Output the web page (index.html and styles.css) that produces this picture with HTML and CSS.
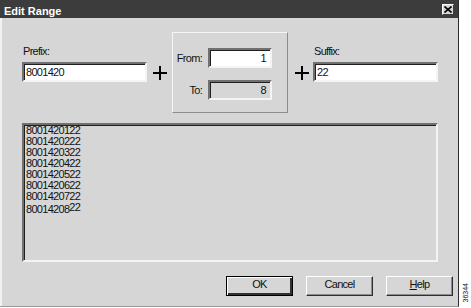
FILE: index.html
```html
<!DOCTYPE html>
<html>
<head>
<meta charset="utf-8">
<title>Edit Range</title>
<link rel="stylesheet" href="styles.css">
</head>
<body>
<div class="page">
  <div class="dialog">
    <div class="titlebar">
      <span class="title">Edit Range</span>
      <span class="close">
        <svg width="8" height="7" viewBox="0 0 8 7"><path d="M0.5 0.5 L7.5 6.5 M7.5 0.5 L0.5 6.5" stroke="#000" stroke-width="1.6" fill="none"/></svg>
      </span>
    </div>
    <div class="content">
      <div class="top-row">
        <div class="field-col">
          <span class="lbl">Prefix:</span>
          <div class="input">8001420</div>
        </div>
        <div class="plus">
          <svg width="14" height="14" viewBox="0 0 14 14"><rect x="0" y="6" width="14" height="2" fill="#000"/><rect x="6" y="0" width="2" height="14" fill="#000"/></svg>
        </div>
        <div class="group">
          <div class="grow">
            <span class="glbl">From:</span>
            <div class="input num">1</div>
          </div>
          <div class="grow">
            <span class="glbl">To:</span>
            <div class="input num disabled">8</div>
          </div>
        </div>
        <div class="plus plus2">
          <svg width="14" height="14" viewBox="0 0 14 14"><rect x="0" y="6" width="14" height="2" fill="#000"/><rect x="6" y="0" width="2" height="14" fill="#000"/></svg>
        </div>
        <div class="field-col">
          <span class="lbl">Suffix:</span>
          <div class="input">22</div>
        </div>
      </div>
      <div class="list">
        <div class="item">8001420122</div>
        <div class="item">8001420222</div>
        <div class="item">8001420322</div>
        <div class="item">8001420422</div>
        <div class="item">8001420522</div>
        <div class="item">8001420622</div>
        <div class="item">8001420722</div>
        <div class="item">80014208<span class="raised">22</span></div>
      </div>
      <div class="buttons">
        <div class="btn default">OK</div>
        <div class="btn">Cancel</div>
        <div class="btn"><u>H</u>elp</div>
      </div>
    </div>
  </div>
  <div class="side"><span class="figid">36344</span></div>
</div>
</body>
</html>
```

FILE: styles.css
```css
* { box-sizing: border-box; }
html, body { margin: 0; padding: 0; background: #fff; }
body {
  font-family: "Liberation Sans", Arial, sans-serif;
  font-size: 11px;
  letter-spacing: -0.7px;
  color: #111;
}
.page {
  display: flex;
  width: 471px;
  height: 308px;
}
.dialog {
  width: 459px;
  height: 307px;
  background: #d6d6d6;
  border-right: 1px solid #2c2c2c;
  border-bottom: 1px solid #9a9a9a;
  box-shadow: inset 3px 0 0 -1px #f2f2f2;
  display: flex;
  flex-direction: column;
}
.titlebar {
  height: 18px;
  background: #3c3c3c;
  display: flex;
  justify-content: space-between;
  align-items: flex-start;
  padding: 0 4px 0 4px;
}
.title {
  font-weight: bold;
  font-size: 11px;
  letter-spacing: 0;
  line-height: 14px;
  padding-top: 4px;
  color: #fff;
}
.close {
  margin-top: 4px;
  width: 12px;
  height: 11px;
  background: #d6d6d6;
  border: 1px solid;
  border-color: #fff #404040 #404040 #fff;
  display: flex;
  align-items: center;
  justify-content: center;
}
.close svg { display: block; }
.content {
  padding: 14px 20px 0 22px;
  display: flex;
  flex-direction: column;
}
.top-row {
  display: flex;
  align-items: flex-start;
  height: 81px;
}
.field-col {
  width: 125px;
  padding-top: 13px;
  display: flex;
  flex-direction: column;
}
.lbl {
  display: block;
  height: 13px;
  line-height: 13px;
  margin-bottom: 4px;
  padding-left: 1px;
}
.input {
  height: 20px;
  background: #fff;
  border: 2px solid;
  border-color: #707070 #f4f4f4 #f4f4f4 #707070;
  box-shadow: inset 1px 1px 0 #202020;
  line-height: 16px;
  padding: 0 2px 0 2px;
  white-space: nowrap;
}
.plus {
  width: 25px;
  padding: 34px 0 0 6px;
}
.plus2 { padding-left: 7px; }
.plus svg { display: block; }
.group {
  width: 116px;
  height: 81px;
  border: 1px solid;
  border-color: #f6f6f6 #8c8c8c #8c8c8c #f6f6f6;
  padding-top: 15px;
  display: flex;
  flex-direction: column;
  gap: 12px;
}
.grow {
  display: flex;
  align-items: center;
  gap: 6px;
}
.glbl {
  width: 29px;
  text-align: right;
}
.input.num {
  width: 64px;
  text-align: right;
  padding-right: 4px;
}
.input.disabled {
  background: #d6d6d6;
}
.list {
  margin-top: 10px;
  height: 139px;
  border: 2px solid;
  border-color: #707070 #f4f4f4 #f4f4f4 #707070;
  box-shadow: inset 1px 1px 0 #202020;
  padding: 0 2px;
}
.item {
  line-height: 11px;
  height: 11px;
  white-space: nowrap;
}
.raised {
  vertical-align: 2px;
}
.buttons {
  margin-top: 14px;
  margin-right: -15px;
  display: flex;
  justify-content: flex-end;
  gap: 13px;
}
.btn {
  width: 67px;
  height: 20px;
  border: 1px solid;
  border-color: #fff #303030 #303030 #fff;
  box-shadow: inset -1px -1px 0 #8c8c8c;
  display: flex;
  align-items: center;
  justify-content: center;
  padding-bottom: 3px;
  line-height: 13px;
}
.btn.default {
  border: 1px solid #000;
  box-shadow: inset 1px 1px 0 #fff, inset -2px -2px 0 #303030;
}
.side {
  width: 12px;
  display: flex;
  flex-direction: column;
  justify-content: flex-end;
  align-items: center;
  padding-bottom: 6px;
}
.figid {
  writing-mode: vertical-rl;
  transform: rotate(180deg);
  font-size: 7px;
  letter-spacing: 0;
  line-height: 7px;
}
```
